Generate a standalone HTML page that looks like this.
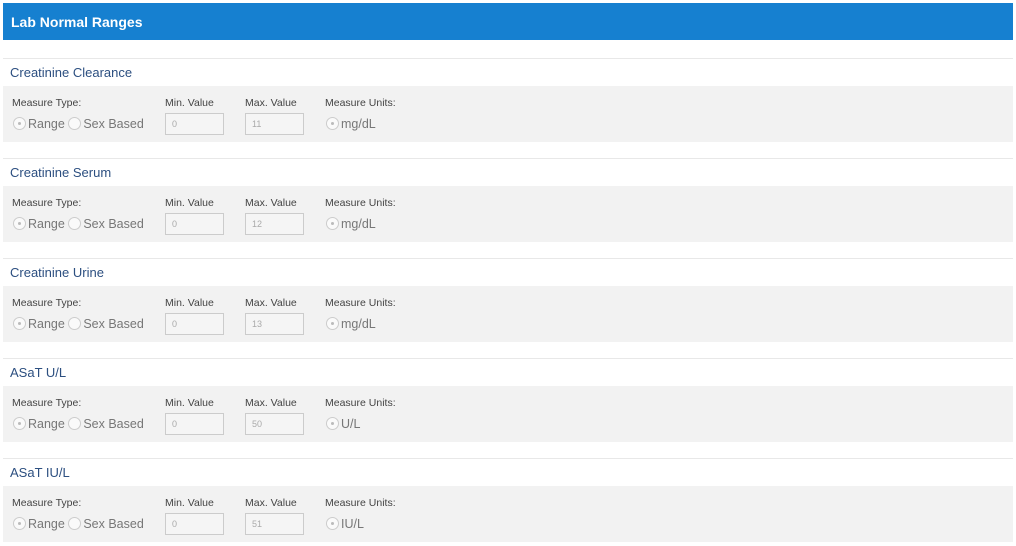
<!DOCTYPE html>
<html><head><style>
body{margin:0;background:#fff;font-family:"Liberation Sans",sans-serif;width:1016px;height:546px;overflow:hidden;position:relative}
.hdr{position:absolute;left:3px;top:3px;width:1010px;height:37px;background:#1680d0;color:#fff;font-size:14px;font-weight:bold;line-height:39px;padding-left:8px;box-sizing:border-box}
.sec{position:absolute;left:3px;width:1010px;height:84px}
.line{position:absolute;left:0;top:0;width:1010px;height:1px;background:#e8e8e8}
.t{position:absolute;left:7px;top:7px;font-size:13px;color:#2c4f80}
.box{position:absolute;left:0;top:28px;width:1010px;height:56px;background:#f2f2f2}
.l{position:absolute;top:11px;font-size:10.5px;color:#444}
.r{position:absolute;top:31px;font-size:12.5px;color:#777}
.rad{display:inline-block;width:13px;height:13px;border:1px solid #ccc;border-radius:50%;background:#fafafa;vertical-align:-2px;margin-right:2px;position:relative;box-sizing:border-box}
.rad.on::after{content:"";position:absolute;left:4px;top:4px;width:3px;height:3px;border-radius:50%;background:#bbb}
.in{position:absolute;top:27px;width:59px;height:22px;border:1px solid #ccc;background:#f5f5f5;box-sizing:border-box;font-size:9px;color:#aaa;line-height:20px;padding-left:6px}
</style></head><body>
<div class="hdr">Lab Normal Ranges</div>

<div class="sec" style="top:58px"><div class="line"></div><div class="t">Creatinine Clearance</div><div class="box">
<div class="l" style="left:9px">Measure Type:</div><div class="l" style="left:162px">Min. Value</div><div class="l" style="left:242px">Max. Value</div><div class="l" style="left:322px">Measure Units:</div>
<div class="r" style="left:10px"><span class="rad on"></span>Range <span class="rad"></span>Sex Based</div>
<div class="in" style="left:162px">0</div><div class="in" style="left:242px">11</div>
<div class="r" style="left:323px"><span class="rad on"></span>mg/dL</div></div></div>

<div class="sec" style="top:158px"><div class="line"></div><div class="t">Creatinine Serum</div><div class="box">
<div class="l" style="left:9px">Measure Type:</div><div class="l" style="left:162px">Min. Value</div><div class="l" style="left:242px">Max. Value</div><div class="l" style="left:322px">Measure Units:</div>
<div class="r" style="left:10px"><span class="rad on"></span>Range <span class="rad"></span>Sex Based</div>
<div class="in" style="left:162px">0</div><div class="in" style="left:242px">12</div>
<div class="r" style="left:323px"><span class="rad on"></span>mg/dL</div></div></div>

<div class="sec" style="top:258px"><div class="line"></div><div class="t">Creatinine Urine</div><div class="box">
<div class="l" style="left:9px">Measure Type:</div><div class="l" style="left:162px">Min. Value</div><div class="l" style="left:242px">Max. Value</div><div class="l" style="left:322px">Measure Units:</div>
<div class="r" style="left:10px"><span class="rad on"></span>Range <span class="rad"></span>Sex Based</div>
<div class="in" style="left:162px">0</div><div class="in" style="left:242px">13</div>
<div class="r" style="left:323px"><span class="rad on"></span>mg/dL</div></div></div>

<div class="sec" style="top:358px"><div class="line"></div><div class="t">ASaT U/L</div><div class="box">
<div class="l" style="left:9px">Measure Type:</div><div class="l" style="left:162px">Min. Value</div><div class="l" style="left:242px">Max. Value</div><div class="l" style="left:322px">Measure Units:</div>
<div class="r" style="left:10px"><span class="rad on"></span>Range <span class="rad"></span>Sex Based</div>
<div class="in" style="left:162px">0</div><div class="in" style="left:242px">50</div>
<div class="r" style="left:323px"><span class="rad on"></span>U/L</div></div></div>

<div class="sec" style="top:458px"><div class="line"></div><div class="t">ASaT IU/L</div><div class="box">
<div class="l" style="left:9px">Measure Type:</div><div class="l" style="left:162px">Min. Value</div><div class="l" style="left:242px">Max. Value</div><div class="l" style="left:322px">Measure Units:</div>
<div class="r" style="left:10px"><span class="rad on"></span>Range <span class="rad"></span>Sex Based</div>
<div class="in" style="left:162px">0</div><div class="in" style="left:242px">51</div>
<div class="r" style="left:323px"><span class="rad on"></span>IU/L</div></div></div>
</body></html>
